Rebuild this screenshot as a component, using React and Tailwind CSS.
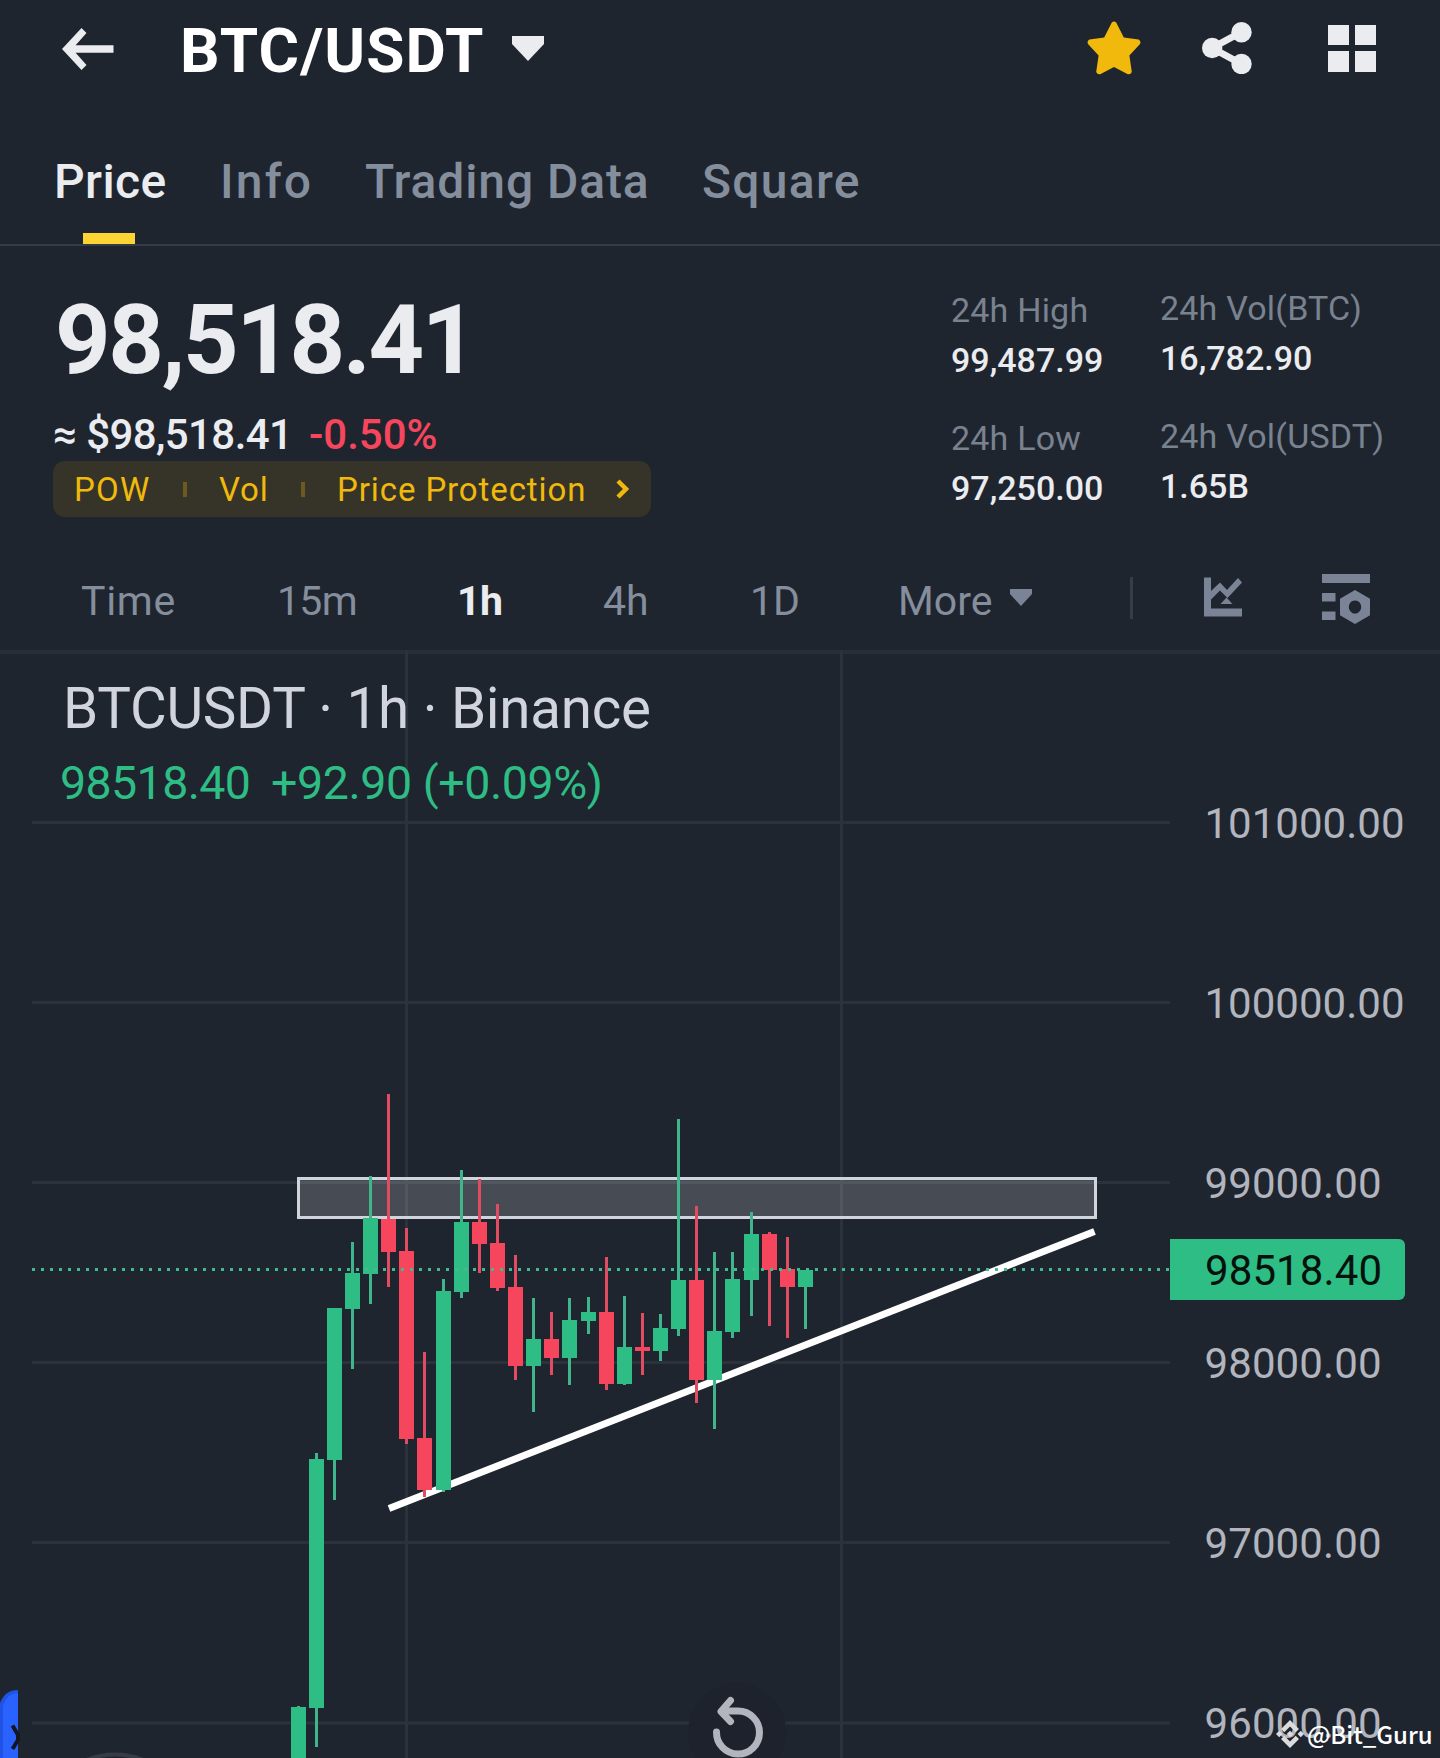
import React from 'react';

const UP = '#2ebd85';
const DOWN = '#f6465d';
const UP_WICK = '#40b48a';
const DOWN_WICK = '#e24c63';

// x, wick top, body top, body bottom, wick bottom, direction
const candles = [
    [291, 1706, 1707, 1760, 1760, 'up'],
    [309, 1453, 1459, 1708, 1747, 'up'],
    [327, 1308, 1308, 1460, 1500, 'up'],
    [345, 1242, 1273, 1309, 1369, 'up'],
    [363, 1176, 1218, 1274, 1304, 'up'],
    [381, 1094, 1219, 1252, 1287, 'down'],
    [399, 1228, 1251, 1439, 1444, 'down'],
    [417, 1352, 1438, 1490, 1497, 'down'],
    [436, 1279, 1291, 1490, 1492, 'up'],
    [454, 1170, 1222, 1292, 1298, 'up'],
    [472, 1179, 1222, 1244, 1273, 'down'],
    [490, 1204, 1243, 1288, 1291, 'down'],
    [508, 1255, 1287, 1366, 1380, 'down'],
    [526, 1298, 1339, 1366, 1412, 'up'],
    [544, 1312, 1339, 1358, 1375, 'down'],
    [562, 1298, 1320, 1358, 1385, 'up'],
    [581, 1297, 1312, 1321, 1334, 'up'],
    [599, 1257, 1312, 1384, 1390, 'down'],
    [617, 1296, 1347, 1384, 1385, 'up'],
    [635, 1313, 1347, 1351, 1375, 'down'],
    [653, 1314, 1328, 1351, 1361, 'up'],
    [671, 1119, 1280, 1329, 1336, 'up'],
    [689, 1206, 1280, 1380, 1403, 'down'],
    [707, 1252, 1331, 1380, 1429, 'up'],
    [725, 1252, 1279, 1332, 1338, 'up'],
    [744, 1212, 1234, 1280, 1316, 'up'],
    [762, 1232, 1234, 1270, 1326, 'down'],
    [780, 1237, 1269, 1287, 1338, 'down'],
    [798, 1270, 1270, 1287, 1329, 'up'],
];

const ticks = [
    { label: '101000.00', y: 822.5, width: 196 },
    { label: '100000.00', y: 1002.5, width: 196 },
    { label: '99000.00', y: 1182.5, width: 173 },
    { label: '98000.00', y: 1362.5, width: 173 },
    { label: '97000.00', y: 1542.5, width: 173 },
    { label: '96000.00', y: 1723, width: 173 },
];

function Header() {
    return (
        <header className="flex h-[97px] items-center">
            <svg className="ml-[62px] h-[42px] w-[52px] shrink-0" viewBox="0 0 52 42" fill="#eaecef">
                <path d="M0 21 19.5 0l5 5L13.6 17.3H51.5v7.4H13.6L24.5 37l-5 5z" />
            </svg>
            <h1 className="mt-[4px] ml-[66px] w-[332px] text-[62px] leading-none font-bold tracking-[1.1px] whitespace-nowrap text-white">
                BTC/USDT
            </h1>
            <svg className="h-[25px] w-[32px] shrink-0" viewBox="0 0 32 25" fill="#eaecef">
                <path d="M0 0h32v8L16 25 0 8z" />
            </svg>
            <svg className="mb-[1px] ml-[543px] h-[54px] w-[54px] shrink-0" viewBox="0 0 54 54" fill="#f0b90b">
                <path d="M24.8 1.5Q27 -.6 29.2 1.5L36.8 16.4 51.6 18.6Q54.4 20.4 53 23L42.4 34.6 44.8 51Q43.6 53.8 40.8 53.2L27 46 13.2 53.2Q10.4 53.8 9.2 51L11.6 34.6 1 23Q-.4 20.4 2.4 18.6L17.2 16.4z" />
            </svg>
            <svg className="mb-[1px] ml-[61px] h-[52px] w-[50px] shrink-0" viewBox="0 0 50 52" fill="#eaecef">
                <path d="M10 26 39.5 10M10 26 39.5 42" stroke="#eaecef" strokeWidth="7" />
                <circle cx="10.2" cy="26" r="10.2" />
                <circle cx="39.5" cy="10.2" r="10.2" />
                <circle cx="39.5" cy="42" r="10.2" />
            </svg>
            <div className="mb-[1px] ml-[76px] grid h-[47px] w-[48px] grid-cols-2 gap-[6px]">
                <span className="bg-[#eaecef]" />
                <span className="bg-[#eaecef]" />
                <span className="bg-[#eaecef]" />
                <span className="bg-[#eaecef]" />
            </div>
        </header>
    );
}

function Tabs() {
    return (
        <nav className="flex h-[149px] border-b-2 border-[#333b47] pt-[61px] pl-[53px] text-[48px] leading-none font-medium whitespace-nowrap text-[#848e9c]">
            <div className="flex w-[167px] flex-col justify-between text-[#eaecef]">
                <span className="ml-[1px] tracking-[0.4px]">Price</span>
                <span className="ml-[30px] h-[11px] w-[52px] bg-[#fcd535]" />
            </div>
            <span className="w-[145px] tracking-[2.2px]">Info</span>
            <span className="w-[337px] tracking-[0.9px]">Trading Data</span>
            <span className="tracking-[1.3px]">Square</span>
        </nav>
    );
}

function Stat({ label, value }) {
    return (
        <div className="flex h-[128px] flex-col gap-[16px] whitespace-nowrap">
            <span className="text-[34px] leading-none tracking-[0.2px] text-[#79828f]">{label}</span>
            <span className="text-[34px] leading-none font-medium text-[#eaecef]">{value}</span>
        </div>
    );
}

function Summary() {
    return (
        <section className="flex h-[306px]">
            <div className="w-[898px] pt-[46px] pl-[53px] whitespace-nowrap">
                <p className="ml-[2px] text-[97px] leading-none font-bold tracking-[-2.4px] text-[#eaecef]">98,518.41</p>
                <p className="mt-[25px] flex text-[42px] leading-none font-medium text-[#eaecef]">
                    <span className="w-[256px] tracking-[-0.6px]">≈ $98,518.41</span>
                    <span className="text-[#f6465d]">-0.50%</span>
                </p>
                <div className="mt-[5px] flex h-[56px] w-[598px] items-center rounded-[12px] bg-[#363429] pl-[21px] text-[33px] leading-none text-[#f0b90b]">
                    <span className="w-[109px] tracking-[1.2px]">POW</span>
                    <span className="h-[15px] w-[4px] bg-[#6d5a20]" />
                    <span className="ml-[32px] w-[82px] tracking-[0.8px]">Vol</span>
                    <span className="h-[15px] w-[4px] bg-[#6d5a20]" />
                    <span className="ml-[32px] w-[279px] tracking-[0.9px]">Price Protection</span>
                    <svg className="h-[20px] w-[14px]" viewBox="0 0 14 20" fill="none" stroke="#f0b90b" strokeWidth="4.5">
                        <path d="M2 2 10 10 2 18" />
                    </svg>
                </div>
            </div>
            <div className="ml-[53px] w-[209px] pt-[47px]">
                <Stat label="24h High" value="99,487.99" />
                <Stat label="24h Low" value="97,250.00" />
            </div>
            <div className="pt-[45px]">
                <Stat label="24h Vol(BTC)" value="16,782.90" />
                <Stat label="24h Vol(USDT)" value="1.65B" />
            </div>
        </section>
    );
}

function Toolbar() {
    return (
        <div className="flex h-[98px] items-center pl-[81px] text-[41px] leading-none whitespace-nowrap text-[#848e9c]">
            <span className="w-[196px] tracking-[0.7px]">Time</span>
            <span className="w-[180px] tracking-[-0.7px]">15m</span>
            <span className="w-[146px] font-bold tracking-[-0.5px] text-[#eaecef]">1h</span>
            <span className="w-[147px]">4h</span>
            <span className="w-[148px]">1D</span>
            <span className="w-[112px]">More</span>
            <svg className="mb-[8px] h-[17px] w-[22px]" viewBox="0 0 22 17" fill="#7a8496">
                <path d="M0 0h22v5L11 17 0 5z" />
            </svg>
            <span className="mb-[6px] ml-[98px] h-[42px] w-[3px] bg-[#363d48]" />
            <svg className="mb-[8px] ml-[71px] h-[40px] w-[38px]" viewBox="0 0 38 40" fill="#7a8496">
                <path d="M0 0.5h7v13.5L16 5.5l7 7.5L34 1l4 4.5L23.5 21 16 13.5 7 22.5v9h31v8H0z" />
                <path d="M22.5 20.5l6 6.5h-12z" />
            </svg>
            <svg className="mb-[4px] ml-[80px] h-[50px] w-[48px]" viewBox="0 0 48 50" fill="#7a8496">
                <path d="M0 0h48v9H0zM0 19h13.5v8.5H0zM0 37.5h13.5v8.5H0z" />
                <path fillRule="evenodd" d="M33 16l15 8.7v16.6L33 50l-15-8.7V24.7zM33 26.5a6.2 6.5 0 1 0 .01 0z" />
            </svg>
        </div>
    );
}

function Chart() {
    return (
        <svg className="block h-[1108px] w-[1440px]" viewBox="0 650 1440 1108">
            <rect x="0" y="650" width="1440" height="4" fill="#272f39" />
            <g fill="#2b323c">
                <rect x="405" y="650" width="3" height="1108" />
                <rect x="840" y="650" width="3" height="1108" />
                {ticks.map((t) => (
                    <rect key={t.label} x="32" y={t.y - 1.5} width="1138" height="3" />
                ))}
            </g>

            <g fontFamily="Roboto, sans-serif">
                <text x="63" y="728" fontSize="56.5" fill="#d1d4dc" textLength="588">BTCUSDT · 1h · Binance</text>
                <g fontSize="46.5" fill="#2ebd85">
                    <text x="60" y="798.5" textLength="191">98518.40</text>
                    <text x="271" y="798.5" textLength="332">+92.90 (+0.09%)</text>
                </g>
                <g fontSize="42" fill="#b2b5be">
                    {ticks.map((t) => (
                        <text key={t.label} x="1204.5" y={t.y + 15} textLength={t.width + 4}>{t.label}</text>
                    ))}
                </g>
            </g>

            {/* resistance zone and rising support */}
            <rect x="298.5" y="1178.5" width="797" height="39" fill="#ffffff" fillOpacity="0.18" stroke="#d1d4dc" strokeWidth="3" />
            <path d="M389 1508.5 1094.5 1231.5" stroke="#ffffff" strokeWidth="7" />

            {candles.map(([x, high, top, bottom, low, dir]) => (
                <g key={x}>
                    <rect x={x + 6} y={high} width="3" height={low - high} fill={dir === 'up' ? UP_WICK : DOWN_WICK} />
                    <rect x={x} y={top} width="15" height={bottom - top} fill={dir === 'up' ? UP : DOWN} />
                </g>
            ))}

            <path d="M32 1269.5H1170" stroke="#45b98e" strokeWidth="3" strokeDasharray="3 6" />
            <path d="M1170 1239h229a6 6 0 0 1 6 6v49a6 6 0 0 1-6 6h-229z" fill="#2ebd85" />
            <text x="1205" y="1285" fontFamily="Roboto, sans-serif" fontSize="42" fill="#06110c" textLength="177">98518.40</text>

            {/* reset view button */}
            <circle cx="737" cy="1732" r="49" fill="#1e222d" />
            <g fill="none" stroke="#b2b5be" strokeWidth="7" strokeLinecap="round" strokeLinejoin="round">
                <path d="M716.5 1732a21.500 21.500 0 1 0 21.500-21H722" />
                <path d="M730.5 1700.5 721 1711.5 730.5 1721.5" />
            </g>

            <circle cx="115" cy="1826" r="71.5" fill="#1e222d" stroke="#363b45" strokeWidth="4" />

            {/* drawer handle */}
            <path d="M0 1703Q5 1690 18 1690V1758H0z" fill="#1e53e5" />
            <path d="M3 1706Q7 1693 18 1693V1758H3z" fill="#2962ff" />
            <path d="M12.5 1725.5 18 1735v5L12.5 1749" fill="none" stroke="#131722" strokeWidth="4" />
        </svg>
    );
}

function Watermark() {
    return (
        <div className="absolute top-[1716px] left-[1276px] flex items-center">
            <svg className="h-[28px] w-[28px]" viewBox="0 0 28 28" fill="#dcdcdc">
                <path d="M14 0 23 9l-3.3 3.3L14 6.6 8.3 12.3 5 9zM14 28 23 19l-3.3-3.3L14 21.4 8.3 15.7 5 19zM14 10.7 17.3 14 14 17.3 10.7 14zM3.2 10.8 6.4 14 3.2 17.2 0 14zM24.8 10.8 28 14 24.8 17.2 21.6 14z" />
            </svg>
            <span className="ml-[3px] font-['Noto_Sans_CJK_SC',sans-serif] text-[24px] leading-[36px] font-medium text-white">@Bit_Guru</span>
        </div>
    );
}

export default function App() {
    return (
        <div className="relative h-[1758px] w-[1440px] overflow-hidden bg-[#1f252f] font-[Roboto,sans-serif]">
            <Header />
            <Tabs />
            <Summary />
            <Toolbar />
            <Chart />
            <Watermark />
        </div>
    );
}
